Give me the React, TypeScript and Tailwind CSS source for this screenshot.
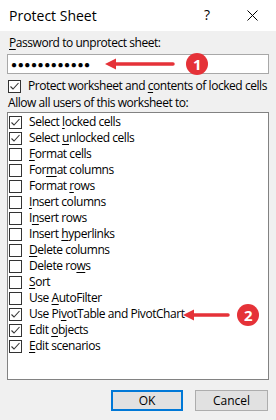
import React from "react";

const font = { fontFamily: '"Open Sans", "Noto Sans", sans-serif' };

function U({ children }: { children: React.ReactNode }) {
  return <span className="underline underline-offset-2 decoration-1">{children}</span>;
}

function Box({ checked }: { checked: boolean }) {
  return (
    <div className="w-[13px] h-[13px] border border-[#333333] bg-white flex items-center justify-center shrink-0">
      {checked && (
        <svg width="11" height="11" viewBox="0 0 11 11">
          <polyline points="1.5,5.5 4,8 9.5,2" fill="none" stroke="#333" strokeWidth="1.1" />
        </svg>
      )}
    </div>
  );
}

const items: [React.ReactNode, boolean][] = [
  [<>Select <U>l</U>ocked cells</>, true],
  [<>Select <U>u</U>nlocked cells</>, true],
  [<><U>F</U>ormat cells</>, false],
  [<>For<U>m</U>at columns</>, false],
  [<>Format <U>r</U>ows</>, false],
  [<><U>I</U>nsert columns</>, false],
  [<>I<U>n</U>sert rows</>, false],
  [<>Insert <U>h</U>yperlinks</>, false],
  [<><U>D</U>elete columns</>, false],
  [<>Delete ro<U>w</U>s</>, false],
  [<><U>S</U>ort</>, false],
  [<>Use <U>A</U>utoFilter</>, false],
  [<>Use Pi<U>v</U>otTable and PivotChart</>, true],
  [<>Edit <U>o</U>bjects</>, true],
  [<><U>E</U>dit scenarios</>, true],
];

function Badge({ n }: { n: string }) {
  return (
    <div className="w-[22px] h-[22px] rounded-full bg-[#e53238] text-white flex items-center justify-center text-[15px] font-bold leading-none">
      {n}
    </div>
  );
}

function Arrow({ w }: { w: number }) {
  return (
    <svg width={w} height="12" viewBox={`0 0 ${w} 12`}>
      <line x1="8" y1="6" x2={w - 2} y2="6" stroke="#e53238" strokeWidth="3.5" strokeLinecap="round" />
      <polygon points={`0,6 11,0.5 11,11.5`} fill="#e53238" />
    </svg>
  );
}

export default function App() {
  return (
    <div className="w-[276px] h-[420px] bg-white flex flex-col text-[12px] tracking-[-0.45px] text-black relative overflow-hidden" style={font}>
      <div className="h-[31px] shrink-0 flex items-center pl-[9px] relative tracking-normal">
        <span className="text-[14px] leading-none">Protect Sheet</span>
        <span className="absolute left-[204px] top-[8px] text-[14px] leading-none">?</span>
        <svg className="absolute left-[247px] top-[10px]" width="11" height="11" viewBox="0 0 11 11">
          <path d="M0.5 0.5 L10.5 10.5 M10.5 0.5 L0.5 10.5" stroke="#000" strokeWidth="1" />
        </svg>
      </div>
      <div className="flex-1 bg-[#f0f0f0] px-[7px] pt-[5px] flex flex-col">
        <div className="h-[14px] leading-[14px] pl-[2px] whitespace-nowrap"><U>P</U>assword to unprotect sheet:</div>
        <div className="mt-[4px] h-[20px] border border-[#a8a8a8] bg-white flex items-center pl-[3px] relative">
          <span className="text-[10px] tracking-[0.6px] leading-none">●●●●●●●●●●●●</span>
          <div className="absolute left-[97px] top-[3px]"><Arrow w={70} /></div>
          <div className="absolute left-[178px] top-[-2px]"><Badge n="1" /></div>
        </div>
        <div className="mt-[5px] h-[14px] flex items-center gap-[7px] pl-[1px]">
          <Box checked />
          <span className="leading-[14px] whitespace-nowrap">Protect worksheet and <U>c</U>ontents of locked cells</span>
        </div>
        <div className="mt-[3px] h-[14px] leading-[14px] pl-[1px] whitespace-nowrap">Allow all users of this worksheet to:</div>
        <div className="mt-[2px] h-[268px] border border-[#828282] bg-white pt-[1px] relative">
          {items.map(([label, c], i) => (
            <div key={i} className="h-[16px] flex items-center gap-[7px] pl-[1px]">
              <Box checked={c} />
              <span className="leading-[16px] whitespace-nowrap">{label}</span>
            </div>
          ))}
          <div className="absolute left-[175px] top-[196px]"><Arrow w={47} /></div>
          <div className="absolute left-[229px] top-[191px]"><Badge n="2" /></div>
        </div>
        <div className="mt-[10px] flex justify-end gap-[12px] pr-[1px] tracking-normal">
          <button className="w-[72px] h-[21px] bg-[#e1e1e1] border-2 border-[#0078d7] leading-none">OK</button>
          <button className="w-[73px] h-[21px] bg-[#e1e1e1] border border-[#adadad] leading-none">Cancel</button>
        </div>
      </div>
    </div>
  );
}
